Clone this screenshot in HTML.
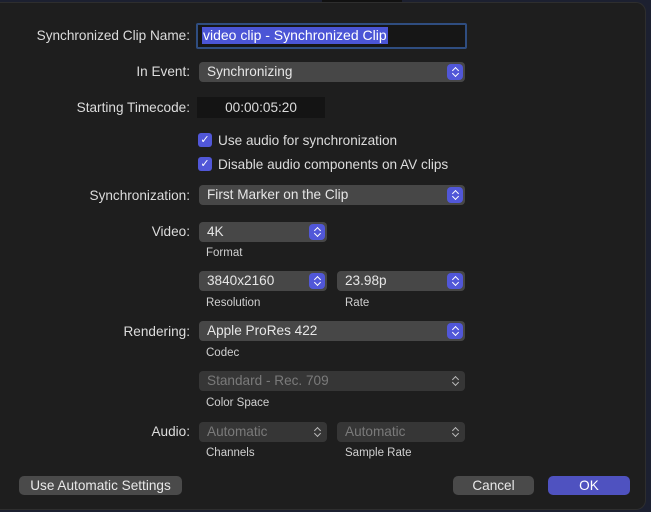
<!DOCTYPE html>
<html><head><style>
body{margin:0;width:651px;height:512px;background:#1c2030;overflow:hidden;font-family:"Liberation Sans",sans-serif;font-size:13.6px;color:#dcdcdc;position:relative}
.dlg{position:absolute;left:0;top:2px;width:645px;height:506px;background:#1e1e1e;border-radius:0 10px 10px 0;border:1px solid #2e2e2e;border-left:none}
.a{position:absolute}
.lbl{position:absolute;right:461px;text-align:right;white-space:nowrap}
.pop{position:absolute;height:20px;background:#474747;border-radius:4px;line-height:20px;padding-left:8px;box-sizing:border-box;color:#e6e6e6}
.pop .st{position:absolute;right:2px;top:2px;width:16px;height:16px;border-radius:4px;background:#5157d8}
.pop .st:before,.pop .st:after{content:"";position:absolute;left:6px;width:4px;height:4px;border-left:1.3px solid #fff;border-top:1.3px solid #fff}
.pop .st:before{top:4px;transform:rotate(45deg)}
.pop .st:after{top:7px;transform:rotate(225deg)}
.dis{background:#363636;color:#7a7a7a}
.dis .st{background:none}
.dis .st:before,.dis .st:after{border-color:#bbb}
.sub{position:absolute;font-size:11.5px;color:#d0d0d0}
.cb{position:absolute;width:14px;height:14px;border-radius:3px;background:#5157d8;color:#fff;font-size:11px;line-height:14px;text-align:center}
.btn{position:absolute;height:19px;top:476px;background:#4a4a4a;border-radius:5px;text-align:center;line-height:19px;color:#e8e8e8}
</style></head><body>
<div class="a" style="left:322px;top:0;width:80px;height:3px;background:#111"></div>
<div class="dlg"></div>
<div class="lbl" style="top:28px">Synchronized Clip Name:</div>
<div class="a" style="left:196px;top:23px;width:271px;height:26px;border:2px solid #2f4d80;box-sizing:border-box;border-radius:2px;background:#161616"></div>
<div class="a" style="left:202px;top:27px;height:17px;line-height:17px;background:#4b55d6;color:#fff;padding:0 1px;font-size:14px">video clip - Synchronized Clip</div>
<div class="lbl" style="top:64px">In Event:</div>
<div class="pop" style="left:199px;top:62px;width:266px">Synchronizing<div class="st"></div></div>
<div class="lbl" style="top:100px">Starting Timecode:</div>
<div class="a" style="left:197px;top:97px;width:128px;height:21px;background:#141414;text-align:center;line-height:21px">00:00:05:20</div>
<div class="cb" style="left:198px;top:133px">✓</div>
<div class="a" style="left:218px;top:133px">Use audio for synchronization</div>
<div class="cb" style="left:198px;top:157px">✓</div>
<div class="a" style="left:218px;top:157px">Disable audio components on AV clips</div>
<div class="lbl" style="top:188px">Synchronization:</div>
<div class="pop" style="left:199px;top:185px;width:266px">First Marker on the Clip<div class="st"></div></div>
<div class="lbl" style="top:224px">Video:</div>
<div class="pop" style="left:199px;top:222px;width:128px">4K<div class="st"></div></div>
<div class="sub" style="left:206px;top:247px">Format</div>
<div class="pop" style="left:199px;top:271px;width:128px">3840x2160<div class="st"></div></div>
<div class="pop" style="left:337px;top:271px;width:128px">23.98p<div class="st"></div></div>
<div class="sub" style="left:206px;top:297px">Resolution</div>
<div class="sub" style="left:345px;top:297px">Rate</div>
<div class="lbl" style="top:324px">Rendering:</div>
<div class="pop" style="left:199px;top:321px;width:266px">Apple ProRes 422<div class="st"></div></div>
<div class="sub" style="left:206px;top:347px">Codec</div>
<div class="pop dis" style="left:199px;top:371px;width:266px">Standard - Rec. 709<div class="st"></div></div>
<div class="sub" style="left:206px;top:397px">Color Space</div>
<div class="lbl" style="top:424px">Audio:</div>
<div class="pop dis" style="left:199px;top:422px;width:128px">Automatic<div class="st"></div></div>
<div class="pop dis" style="left:337px;top:422px;width:128px">Automatic<div class="st"></div></div>
<div class="sub" style="left:206px;top:447px">Channels</div>
<div class="sub" style="left:345px;top:447px">Sample Rate</div>
<div class="btn" style="left:19px;width:163px">Use Automatic Settings</div>
<div class="btn" style="left:453px;width:81px">Cancel</div>
<div class="btn" style="left:548px;width:82px;background:#4f52c0;color:#fff">OK</div>
</body></html>
